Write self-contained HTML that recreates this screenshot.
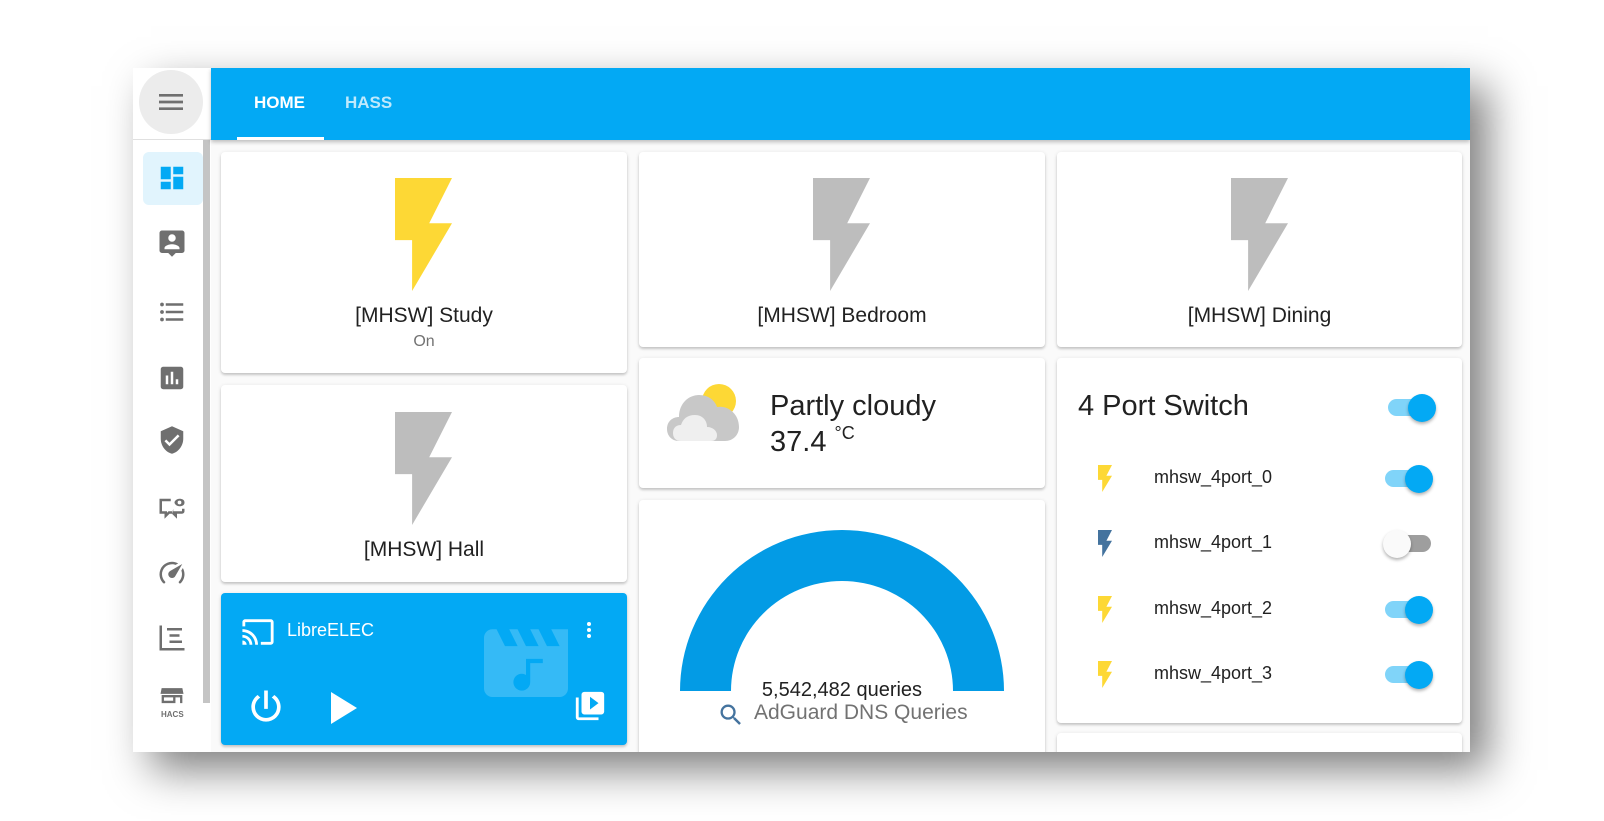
<!DOCTYPE html>
<html><head><meta charset="utf-8"><style>
*{margin:0;padding:0;box-sizing:border-box}
body{width:1604px;height:821px;background:#fff;position:relative;overflow:hidden;font-family:"Liberation Sans",sans-serif;color:#212121}
.a{position:absolute}
.win{left:133px;top:68px;width:1337px;height:684px;background:#fafafa;box-shadow:18px 18px 40px rgba(0,0,0,.5);overflow:hidden}
.card{position:absolute;background:#fff;border-radius:4px;box-shadow:0 2px 2px rgba(0,0,0,.14),0 1px 4px rgba(0,0,0,.12)}
.ico{position:absolute;fill:#6f6f6f}
.t{position:absolute;white-space:nowrap}
.tg{position:absolute;width:46px;height:17px;border-radius:9px;background:#80d4f9}
.tg b{position:absolute;width:28px;height:28px;border-radius:50%;top:-5.5px;right:-2px;background:#03a9f4;box-shadow:0 2px 3px rgba(0,0,0,.3)}
.tg.off{background:#9e9e9e}
.tg.off b{left:-2px;right:auto;background:#fafafa}
</style></head><body>
<div class="a win">
 <!-- sidebar -->
 <div class="a" style="left:0;top:0;width:78px;height:684px;background:#fff"></div>
 <div class="a" style="left:70px;top:72px;width:7px;height:563px;background:#c4c4c4"></div>
 <div class="a" style="left:0;top:71px;width:78px;height:1px;background:#e0e0e0"></div>
 <div class="a" style="left:6px;top:2px;width:64px;height:64px;border-radius:50%;background:#ececec"></div>
 <svg class="ico" style="left:22px;top:18px" width="32" height="32" viewBox="0 0 24 24"><path d="M3,6H21V8H3V6M3,11H21V13H3V11M3,16H21V18H3V16Z"/></svg>
 <div class="a" style="left:10px;top:84px;width:60px;height:53px;border-radius:6px;background:#e1f4fd"></div>
 <svg class="ico" style="left:24px;top:95px;fill:#03a9f4" width="30" height="30" viewBox="0 0 24 24"><path d="M13,3V9H21V3M13,21H21V11H13M3,21H11V15H3M3,13H11V3H3V13Z"/></svg>
 <svg class="ico" style="left:24px;top:160px" width="30" height="30" viewBox="0 0 24 24"><path d="M4,2H20A2,2 0 0,1 22,4V18A2,2 0 0,1 20,20H15L12,23L9,20H4A2,2 0 0,1 2,18V4A2,2 0 0,1 4,2M12,5A3,3 0 0,0 9,8A3,3 0 0,0 12,11A3,3 0 0,0 15,8A3,3 0 0,0 12,5M6,16V17H18V16C18,14 14,13 12,13C10,13 6,14 6,16Z"/></svg>
 <svg class="ico" style="left:24px;top:229px" width="30" height="30" viewBox="0 0 24 24"><path d="M7,5H21V7H7V5M7,13V11H21V13H7M4,4.5A1.5,1.5 0 0,1 5.5,6A1.5,1.5 0 0,1 4,7.5A1.5,1.5 0 0,1 2.5,6A1.5,1.5 0 0,1 4,4.5M4,10.5A1.5,1.5 0 0,1 5.5,12A1.5,1.5 0 0,1 4,13.5A1.5,1.5 0 0,1 2.5,12A1.5,1.5 0 0,1 4,10.5M7,19V17H21V19H7M4,16.5A1.5,1.5 0 0,1 5.5,18A1.5,1.5 0 0,1 4,19.5A1.5,1.5 0 0,1 2.5,18A1.5,1.5 0 0,1 4,16.5Z"/></svg>
 <svg class="ico" style="left:24px;top:295px" width="30" height="30" viewBox="0 0 24 24"><path d="M19,3H5C3.89,3 3,3.89 3,5V19A2,2 0 0,0 5,21H19A2,2 0 0,0 21,19V5C21,3.89 20.1,3 19,3M9,17H7V10H9V17M13,17H11V7H13V17M17,17H15V13H17V17Z"/></svg>
 <svg class="ico" style="left:24px;top:357px" width="30" height="30" viewBox="0 0 24 24"><path d="M10,17L6,13L7.41,11.59L10,14.17L16.59,7.58L18,9M12,1L3,5V11C3,16.55 6.84,21.74 12,23C17.16,21.74 21,16.55 21,11V5L12,1Z"/></svg>
 <svg class="ico" style="left:24px;top:427px" width="30" height="30" viewBox="0 0 24 24"><path d="M2,3V15H6V19L10,15H12V13H9.2L8,14.2V13H4V5H11V3H2M18,3C15.8,3 14,4.8 14,6S15.8,9 18,9 22,8.2 22,6 20.2,3 18,3M18,4.5A1.5,1.5 0 0,1 19.5,6A1.5,1.5 0 0,1 18,7.5A1.5,1.5 0 0,1 16.5,6A1.5,1.5 0 0,1 18,4.5M13,11V13H20V11H22V13A2,2 0 0,1 20,15H16V19L12,15"/></svg>
 <svg class="ico" style="left:24px;top:490px" width="30" height="30" viewBox="0 0 24 24"><path d="M12,16A3,3 0 0,1 9,13C9,11.88 9.61,10.9 10.5,10.39L20.21,4.77L14.68,14.35C14.18,15.33 13.17,16 12,16M12,3C13.81,3 15.5,3.5 16.97,4.32L14.87,5.53C14,5.19 13,5 12,5A8,8 0 0,0 4,13C4,15.21 4.89,17.21 6.34,18.65H6.35C6.74,19.04 6.74,19.67 6.35,20.06C5.96,20.45 5.32,20.45 4.93,20.07C3.12,18.26 2,15.76 2,13A10,10 0 0,1 12,3M22,13C22,15.76 20.88,18.26 19.07,20.07C18.68,20.45 18.05,20.45 17.66,20.06C17.27,19.67 17.27,19.04 17.66,18.65C19.11,17.2 20,15.21 20,13C20,12 19.81,11 19.46,10.1L20.67,8C21.5,9.5 22,11.18 22,13Z"/></svg>
 <svg class="ico" style="left:24px;top:555px" width="30" height="30" viewBox="0 0 24 24"><path d="M2,2H4V20H22V22H2V2M8,4H20V6H8V4M10,9H18V11H10V9M10,14H20V16H10V14Z"/></svg>
 <svg class="ico" style="left:25px;top:619px" width="28" height="23" viewBox="0 0 24 20"><path d="M3,1H21L22,6H2L3,1M3,7H21V14H19V9H15V14H3V7M5,9V12H13V9H5Z"/></svg>
 <div class="t" style="left:28px;top:642px;font-size:8px;font-weight:bold;color:#6f6f6f">HACS</div>

 <!-- header -->
 <div class="a" style="left:78px;top:0;width:1259px;height:72px;background:#03a9f4;box-shadow:0 2px 4px rgba(0,0,0,.25)"></div>
 <div class="t" style="left:121px;top:25px;font-size:17px;font-weight:bold;color:#fff">HOME</div>
 <div class="t" style="left:212px;top:25px;font-size:17px;font-weight:bold;color:rgba(255,255,255,.75)">HASS</div>
 <div class="a" style="left:104px;top:69px;width:87px;height:3px;background:#fff"></div>

 <!-- col1 -->
 <div class="card" style="left:88px;top:84px;width:406px;height:221px"></div>
 <svg class="a" style="left:262px;top:110px" width="57" height="113" viewBox="7 2 10 20" preserveAspectRatio="none"><path fill="#fdd835" d="M7,2V13H10V22L17,10H13L17,2H7Z"/></svg>
 <div class="t" style="left:88px;width:406px;text-align:center;top:236px;font-size:21px">[MHSW] Study</div>
 <div class="t" style="left:88px;width:406px;text-align:center;top:265px;font-size:16px;color:#727272">On</div>

 <div class="card" style="left:88px;top:317px;width:406px;height:197px"></div>
 <svg class="a" style="left:262px;top:344px" width="57" height="113" viewBox="7 2 10 20" preserveAspectRatio="none"><path fill="#bdbdbd" d="M7,2V13H10V22L17,10H13L17,2H7Z"/></svg>
 <div class="t" style="left:88px;width:406px;text-align:center;top:470px;font-size:21px">[MHSW] Hall</div>

 <div class="card" style="left:88px;top:525px;width:406px;height:152px;background:#03a9f4"></div>
 <svg class="a" style="left:351px;top:557px;fill:rgba(255,255,255,.2)" width="84" height="72" viewBox="2 3 20 17" preserveAspectRatio="none"><path d="M18,4L20,8H17L15,4H13L15,8H12L10,4H8L10,8H7L5,4H4A2,2 0 0,0 2,6V18A2,2 0 0,0 4,20H20A2,2 0 0,0 22,18V4H18M13,12V16.5A2,2 0 0,1 11,18.5A2,2 0 0,1 9,16.5A2,2 0 0,1 11,14.5C11.4,14.5 11.7,14.6 12,14.8V11H16V12H13Z"/></svg>
 <svg class="a" style="left:108px;top:547px;fill:#fff" width="34" height="34" viewBox="0 0 24 24"><path d="M1,10V12A9,9 0 0,1 10,21H12C12,14.92 7.07,10 1,10M1,14V16A5,5 0 0,1 6,21H8A7,7 0 0,0 1,14M1,18V21H4A3,3 0 0,0 1,18M21,3H3C1.89,3 1,3.89 1,5V8H3V5H21V19H14V21H21A2,2 0 0,0 23,19V5C23,3.89 22.1,3 21,3Z"/></svg>
 <div class="t" style="left:154px;top:552px;font-size:18px;color:#fff">LibreELEC</div>
 <svg class="a" style="left:444px;top:550px;fill:#fff" width="24" height="24" viewBox="0 0 24 24"><path d="M12,16A2,2 0 0,1 14,18A2,2 0 0,1 12,20A2,2 0 0,1 10,18A2,2 0 0,1 12,16M12,10A2,2 0 0,1 14,12A2,2 0 0,1 12,14A2,2 0 0,1 10,12A2,2 0 0,1 12,10M12,4A2,2 0 0,1 14,6A2,2 0 0,1 12,8A2,2 0 0,1 10,6A2,2 0 0,1 12,4Z"/></svg>
 <svg class="a" style="left:111px;top:617px;fill:#fff" width="44" height="44" viewBox="0 0 24 24"><path d="M16.56,5.44L15.11,6.89C16.84,7.94 18,9.83 18,12A6,6 0 0,1 12,18A6,6 0 0,1 6,12C6,9.83 7.16,7.94 8.88,6.88L7.44,5.44C5.36,6.88 4,9.28 4,12A8,8 0 0,0 12,20A8,8 0 0,0 20,12C20,9.28 18.640,6.88 16.56,5.44M13,3H11V13H13"/></svg>
 <svg class="a" style="left:198px;top:624px;fill:#fff" width="26" height="32" viewBox="0 0 26 32"><path d="M0,0L26,16L0,32Z"/></svg>
 <svg class="a" style="left:440px;top:621px;fill:#fff" width="34" height="34" viewBox="0 0 24 24"><path d="M4,6H2V20A2,2 0 0,0 4,22H18V20H4V6M20,2H8A2,2 0 0,0 6,4V16A2,2 0 0,0 8,18H20A2,2 0 0,0 22,16V4A2,2 0 0,0 20,2M12,14.5V5.5L18,10L12,14.5Z"/></svg>

 <!-- col2 -->
 <div class="card" style="left:506px;top:84px;width:406px;height:195px"></div>
 <svg class="a" style="left:680px;top:110px" width="57" height="113" viewBox="7 2 10 20" preserveAspectRatio="none"><path fill="#bdbdbd" d="M7,2V13H10V22L17,10H13L17,2H7Z"/></svg>
 <div class="t" style="left:506px;width:406px;text-align:center;top:236px;font-size:21px">[MHSW] Bedroom</div>

 <div class="card" style="left:506px;top:290px;width:406px;height:130px"></div>
 <svg class="a" style="left:534px;top:315px" width="76" height="60" viewBox="0 0 76 60">
  <circle cx="52" cy="18" r="17" fill="#fdd835"/>
  <path fill="#c8c8c8" d="M12,58C4,58 0,52 0,46C0,38 6,34 12,34C12,20 22,12 32,12C42,12 48,18 50,24C60,22 72,30 72,44C72,52 66,58 58,58Z"/>
  <path fill="#efefef" d="M14,58C8,58 6,54 6,50C6,44 10,42 14,42C16,36 20,32 28,32C36,32 40,38 40,44C46,44 50,48 50,52C50,56 48,58 44,58Z"/>
 </svg>
 <div class="t" style="left:637px;top:322px;font-size:29px">Partly cloudy</div>
 <div class="t" style="left:637px;top:358px;font-size:29px">37.4 <span style="font-size:18px;position:relative;top:-12px">°C</span></div>

 <div class="card" style="left:506px;top:432px;width:406px;height:260px"></div>
 <svg class="a" style="left:547px;top:461px" width="324" height="163" viewBox="0 0 324 163"><path fill="#039be5" d="M0,162A162,161 0 0,1 324,162L273,162A111,110 0 0,0 51,162Z"/></svg>
 <div class="t" style="left:506px;width:406px;text-align:center;top:611px;font-size:20px">5,542,482 queries</div>
 <svg class="a" style="left:584px;top:633px;fill:#44739e" width="28" height="28" viewBox="0 0 24 24"><path d="M9.5,3A6.5,6.5 0 0,1 16,9.5C16,11.11 15.41,12.590 14.44,13.73L14.71,14H15.5L20.5,19L19,20.5L14,15.5V14.71L13.73,14.44C12.59,15.41 11.11,16 9.5,16A6.5,6.5 0 0,1 3,9.5A6.5,6.5 0 0,1 9.5,3M9.5,5C7,5 5,7 5,9.5C5,12 7,14 9.5,14C12,14 14,12 14,9.5C14,7 12,5 9.5,5Z"/></svg>
 <div class="t" style="left:621px;top:633px;font-size:21px;color:#727272">AdGuard DNS Queries</div>

 <!-- col3 -->
 <div class="card" style="left:924px;top:84px;width:405px;height:195px"></div>
 <svg class="a" style="left:1098px;top:110px" width="57" height="113" viewBox="7 2 10 20" preserveAspectRatio="none"><path fill="#bdbdbd" d="M7,2V13H10V22L17,10H13L17,2H7Z"/></svg>
 <div class="t" style="left:924px;width:405px;text-align:center;top:236px;font-size:21px">[MHSW] Dining</div>

 <div class="card" style="left:924px;top:290px;width:405px;height:365px"></div>
 <div class="t" style="left:945px;top:322px;font-size:29px">4 Port Switch</div>
 <div class="tg" style="left:1255px;top:331px"><b></b></div>

 <svg class="a" style="left:965px;top:397px" width="14" height="27" viewBox="7 2 10 20" preserveAspectRatio="none"><path fill="#fdd835" d="M7,2V13H10V22L17,10H13L17,2H7Z"/></svg>
 <div class="t" style="left:1021px;top:399px;font-size:18px">mhsw_4port_0</div>
 <div class="tg" style="left:1252px;top:402px"><b></b></div>

 <svg class="a" style="left:965px;top:462px" width="14" height="27" viewBox="7 2 10 20" preserveAspectRatio="none"><path fill="#44739e" d="M7,2V13H10V22L17,10H13L17,2H7Z"/></svg>
 <div class="t" style="left:1021px;top:464px;font-size:18px">mhsw_4port_1</div>
 <div class="tg off" style="left:1252px;top:467px"><b></b></div>

 <svg class="a" style="left:965px;top:528px" width="14" height="27" viewBox="7 2 10 20" preserveAspectRatio="none"><path fill="#fdd835" d="M7,2V13H10V22L17,10H13L17,2H7Z"/></svg>
 <div class="t" style="left:1021px;top:530px;font-size:18px">mhsw_4port_2</div>
 <div class="tg" style="left:1252px;top:533px"><b></b></div>

 <svg class="a" style="left:965px;top:593px" width="14" height="27" viewBox="7 2 10 20" preserveAspectRatio="none"><path fill="#fdd835" d="M7,2V13H10V22L17,10H13L17,2H7Z"/></svg>
 <div class="t" style="left:1021px;top:595px;font-size:18px">mhsw_4port_3</div>
 <div class="tg" style="left:1252px;top:598px"><b></b></div>

 <div class="card" style="left:924px;top:665px;width:405px;height:60px"></div>
</div>
</body></html>
